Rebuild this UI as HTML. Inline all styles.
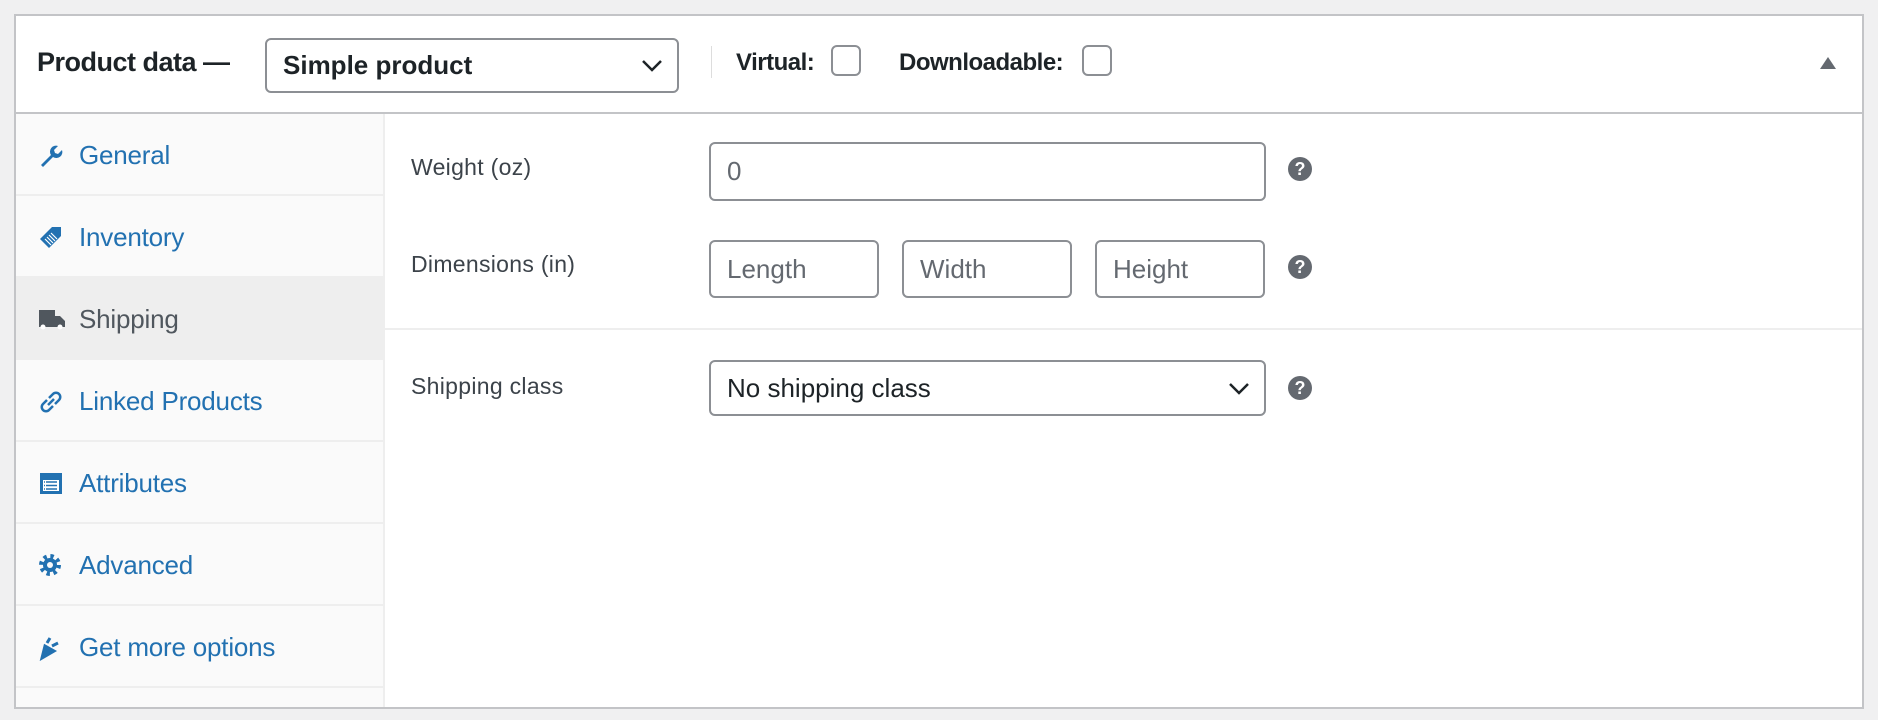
<!DOCTYPE html>
<html><head><meta charset="utf-8"><style>
*{box-sizing:border-box;margin:0;padding:0}
body{width:1878px;height:720px;background:#f0f0f1;font-family:"Liberation Sans",sans-serif;position:relative;overflow:hidden;color:#1d2327}
.box{position:absolute;left:14px;top:14px;width:1850px;height:695px;background:#fff;border:2px solid #c3c4c7}
.hdr{position:absolute;left:0;top:0;width:100%;height:98px;border-bottom:2px solid #c3c4c7}
.abs{position:absolute}
.side{position:absolute;left:0;top:98px;width:369px;bottom:0;background:#fafafa;border-right:2px solid #eee}
.row{position:absolute;left:0;width:367px;height:82px;border-bottom:2px solid #eee}
.row span{position:absolute;left:63px;top:26px;font-size:26px;color:#2271b1;letter-spacing:-0.2px}
.row svg{position:absolute;left:22px;top:29px}
.inp{position:absolute;border:2px solid #8c8f94;border-radius:6px;background:#fff;font-size:26px;padding-left:16px;display:flex;align-items:center;color:#646970}
.lbl{position:absolute;left:395px;font-size:23px;color:#3c434a;letter-spacing:0.3px}
.help{position:absolute;width:24px;height:24px;border-radius:50%;background:#646970;color:#fff;font-size:18px;font-weight:bold;text-align:center;line-height:24px}
.cb{position:absolute;width:30px;height:31px;border:2px solid #8c8f94;border-radius:6px;background:#fff}
</style></head><body>
<div class="box">
 <div class="hdr">
  <div class="abs" style="left:21px;top:31px;font-size:27px;font-weight:bold;letter-spacing:-0.5px">Product data —</div>
  <div class="inp" style="left:249px;top:22px;width:414px;height:55px;color:#1d2327;font-weight:bold;font-size:26px">Simple product
   <svg class="abs" style="right:14px;top:19px" width="22" height="14" viewBox="0 0 22 14"><path d="M2 2l9 9 9-9" fill="none" stroke="#1d2327" stroke-width="2.5"/></svg></div>
  <div class="abs" style="left:695px;top:30px;width:1px;height:32px;background:#ddd"></div>
  <div class="abs" style="left:720px;top:33px;font-size:24px;font-weight:bold;letter-spacing:-0.5px">Virtual:</div>
  <div class="cb" style="left:815px;top:29px"></div>
  <div class="abs" style="left:883px;top:33px;font-size:24px;font-weight:bold;letter-spacing:-0.5px">Downloadable:</div>
  <div class="cb" style="left:1066px;top:29px"></div>
  <svg class="abs" style="left:1803px;top:40px" width="18" height="14"><path d="M9 1L17 13H1Z" fill="#646970"/></svg>
 </div>
 <div class="side">
  <div class="row" style="top:0"><svg width="26" height="26" viewBox="0 0 26 26"><path d="M3 22l10-10a6 6 0 0 1 7-9l-4 4 1 3 3 1 4-4a6 6 0 0 1-9 7L5 24z" fill="#2271b1"/></svg><span>General</span></div>
  <div class="row" style="top:82px"><svg width="26" height="26" viewBox="0 0 26 26"><path d="M2 14L14 2h9v9L11 23z" fill="#2271b1"/><path d="M7 14l6 6M9 12l6 6M11 10l6 6M13 8l6 6" stroke="#fff" stroke-width="1.2"/></svg><span>Inventory</span></div>
  <div class="row" style="top:164px;background:#eee"><svg width="28" height="24" viewBox="0 0 28 24"><path d="M1 3h16v6h5l5 5v6H1z" fill="#50575e"/><circle cx="5" cy="20" r="2.5" fill="#fff"/><circle cx="22" cy="20" r="2.5" fill="#fff"/></svg><span style="color:#50575e">Shipping</span></div>
  <div class="row" style="top:246px"><svg width="26" height="26" viewBox="0 0 26 26"><path d="M11 9l4-4a4 4 0 0 1 6 6l-4 4M15 17l-4 4a4 4 0 0 1-6-6l4-4M10 16l6-6" fill="none" stroke="#2271b1" stroke-width="2.5"/></svg><span>Linked Products</span></div>
  <div class="row" style="top:328px"><svg width="26" height="26" viewBox="0 0 26 26"><rect x="2" y="2" width="22" height="21" fill="#2271b1"/><rect x="5" y="9" width="16" height="11" fill="#fff"/><path d="M8 11h11M8 14.5h11M8 18h11M6 11h1M6 14.5h1M6 18h1" stroke="#2271b1" stroke-width="1.5"/></svg><span>Attributes</span></div>
  <div class="row" style="top:410px"><svg width="26" height="26" viewBox="0 0 26 26"><circle cx="12" cy="12" r="8" fill="none" stroke="#2271b1" stroke-width="6" stroke-dasharray="3 3.3"/><circle cx="12" cy="12" r="7" fill="#2271b1"/><circle cx="12" cy="12" r="3" fill="#fafafa"/></svg><span>Advanced</span></div>
  <div class="row" style="top:492px"><svg width="26" height="26" viewBox="0 0 26 26"><path d="M4 23l3-12 9 5zM9 8l3-5M14 11l6-3" fill="#2271b1" stroke="#2271b1" stroke-width="3"/></svg><span>Get more options</span></div>
 </div>
 <div class="lbl" style="top:138px">Weight (oz)</div>
 <div class="inp" style="left:693px;top:126px;width:557px;height:59px">0</div>
 <div class="help" style="left:1272px;top:141px">?</div>
 <div class="lbl" style="top:235px">Dimensions (in)</div>
 <div class="inp" style="left:693px;top:224px;width:170px;height:58px">Length</div>
 <div class="inp" style="left:886px;top:224px;width:170px;height:58px">Width</div>
 <div class="inp" style="left:1079px;top:224px;width:170px;height:58px">Height</div>
 <div class="help" style="left:1272px;top:239px">?</div>
 <div class="abs" style="left:369px;top:312px;right:0;height:2px;background:#eee"></div>
 <div class="lbl" style="top:357px">Shipping class</div>
 <div class="inp" style="left:693px;top:344px;width:557px;height:56px;color:#1d2327;font-size:26px">No shipping class
  <svg class="abs" style="right:14px;top:20px" width="22" height="14" viewBox="0 0 22 14"><path d="M2 2l9 9 9-9" fill="none" stroke="#1d2327" stroke-width="2.5"/></svg></div>
 <div class="help" style="left:1272px;top:360px">?</div>
</div>
</body></html>
